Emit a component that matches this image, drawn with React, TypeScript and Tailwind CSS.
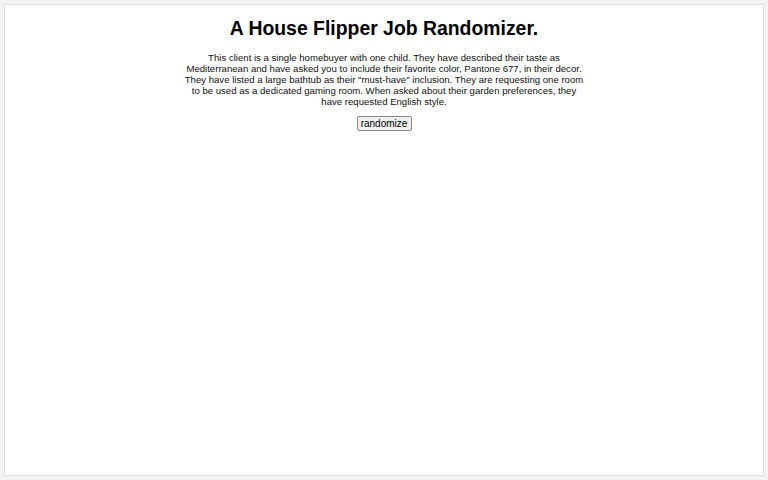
export default function App() {
  return (
    <div className="h-screen w-full bg-[#f3f3f3] p-[4px]" style={{ fontFamily: '"Liberation Sans", Arial, sans-serif' }}>
      <div className="flex h-full flex-col items-center border border-[#dedede] bg-white">
        <h1 className="mt-[11px] text-[19.4px] font-bold leading-[24px] text-black">A House Flipper Job Randomizer.</h1>
        <p className="mt-[12px] w-[402px] text-center text-[9.6px] leading-[11px] text-[#111]">
          This client is a single homebuyer with one child. They have described their taste as Mediterranean and have asked you to include their favorite color, Pantone 677, in their decor. They have listed a large bathtub as their "must-have" inclusion. They are requesting one room to be used as a dedicated gaming room. When asked about their garden preferences, they have requested English style.
        </p>
        <button className="mt-[9px] h-[15px] w-[55px] rounded-[2px] border border-[#8a8a8a] bg-[#efefef] text-[10px] leading-[12px] text-black">
          randomize
        </button>
      </div>
    </div>
  );
}
